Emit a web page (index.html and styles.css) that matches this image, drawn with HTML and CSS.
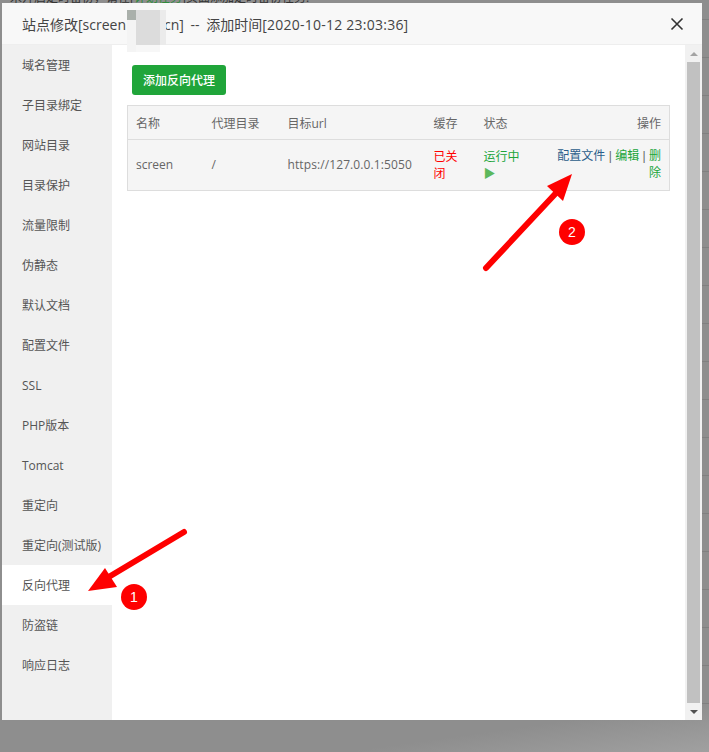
FILE: index.html
```html
<!DOCTYPE html>
<html lang="zh">
<head>
<meta charset="utf-8">
<title>站点修改</title>
<link rel="stylesheet" href="styles.css">
</head>
<body>
<div class="backdrop-text">未开启定时备份，请在[<span class="bd-green">计划任务</span>]页面添加定时备份任务!</div>
<div class="backdrop-lines"></div>
<div class="dialog">
  <header class="dialog-head">
    <div class="dialog-title">站点修改[screen<span class="title-gap"></span>cn]<span class="dash"> -- </span>添加时间<span class="date">[2020-10-12 23:03:36]</span></div>
    <svg class="close" width="14" height="14" viewBox="0 0 14 14"><path d="M1.5 1.5 12.5 12.5M12.5 1.5 1.5 12.5" stroke="#333" stroke-width="1.6" fill="none"/></svg>
  </header>
  <div class="dialog-body">
    <nav class="side">
      <div class="side-item">域名管理</div>
      <div class="side-item">子目录绑定</div>
      <div class="side-item">网站目录</div>
      <div class="side-item">目录保护</div>
      <div class="side-item">流量限制</div>
      <div class="side-item">伪静态</div>
      <div class="side-item">默认文档</div>
      <div class="side-item">配置文件</div>
      <div class="side-item">SSL</div>
      <div class="side-item">PHP版本</div>
      <div class="side-item">Tomcat</div>
      <div class="side-item">重定向</div>
      <div class="side-item">重定向(测试版)</div>
      <div class="side-item active">反向代理</div>
      <div class="side-item">防盗链</div>
      <div class="side-item">响应日志</div>
    </nav>
    <main class="content">
      <button class="add-btn">添加反向代理</button>
      <table class="proxy">
        <colgroup>
          <col class="c1"><col class="c2"><col class="c3"><col class="c4"><col class="c5"><col class="c6">
        </colgroup>
        <thead>
          <tr><th>名称</th><th>代理目录</th><th>目标url</th><th>缓存</th><th>状态</th><th class="right">操作</th></tr>
        </thead>
        <tbody>
          <tr>
            <td class="latin">screen</td>
            <td class="latin">/</td>
            <td class="latin url">https://127.0.0.1:5050</td>
            <td class="off">已关闭</td>
            <td class="on">运行中<br><span class="play">▶</span></td>
            <td class="right ops"><a class="blue">配置文件</a> | <a class="green">编辑</a> | <a class="green">删除</a></td>
          </tr>
        </tbody>
      </table>
    </main>
    <div class="scrollbar">
      <div class="scroll-btn"><span class="tri up"></span></div>
      <div class="scroll-thumb"></div>
      <div class="scroll-btn"><span class="tri down"></span></div>
    </div>
  </div>
</div>
<div class="blur b1"></div>
<div class="blur b2"></div>
<div class="blur b3"></div>
<div class="blur b4"></div>
<div class="blur b5"></div>
<svg class="marks" width="709" height="752" viewBox="0 0 709 752">
  <g fill="#fe0000" stroke="none">
    <path d="M184 532 102 581" stroke="#fe0000" stroke-width="6" stroke-linecap="round" fill="none"/>
    <polygon points="88,591 105,568 117,587"/>
    <path d="M486 268 557 192" stroke="#fe0000" stroke-width="6" stroke-linecap="round" fill="none"/>
    <polygon points="572,174 547,186 563,201"/>
    <circle cx="134" cy="597" r="13"/>
    <circle cx="572" cy="232" r="13"/>
  </g>
  <g class="mark-num">
    <text x="134" y="602" text-anchor="middle">1</text>
    <text x="572" y="237" text-anchor="middle">2</text>
  </g>
</svg>
</body>
</html>
```

FILE: styles.css
```css
html, body {
  margin: 0;
  padding: 0;
}
body {
  width: 709px;
  height: 752px;
  position: relative;
  overflow: hidden;
  background: linear-gradient(172deg, #8e8e8e 0%, #8e8e8e 94%, #a0a0a0 100%);
  font-family: "Open Sans", "Noto Sans CJK SC", sans-serif;
  font-size: 12px;
  color: #666;
}
.backdrop-text {
  height: 8px;
  margin-top: -5px;
  overflow: hidden;
  padding-left: 10px;
  font-size: 12px;
  line-height: 6px;
  color: #333;
  white-space: nowrap;
}
.bd-green {
  color: #2e8b3d;
}
.backdrop-lines {
  position: absolute;
  right: 0;
  top: 19px;
  width: 7px;
  height: 700px;
  background: repeating-linear-gradient(180deg, #808080 0, #808080 1px, transparent 1px, transparent 38px);
}
.dialog {
  position: relative;
  width: 700px;
  height: 717px;
  margin-left: 2px;
  background: #fff;
  display: flex;
  flex-direction: column;
}
.dialog-head {
  height: 41px;
  flex: none;
  background: #f8f8f8;
  border-bottom: 1px solid #eee;
  display: flex;
  align-items: center;
  justify-content: space-between;
  padding: 0 18px 0 20px;
}
.dialog-title {
  font-size: 14px;
  color: #444;
  white-space: nowrap;
}
.title-gap {
  display: inline-block;
  width: 38px;
}
.dash {
  word-spacing: 3px;
}
.date {
  letter-spacing: 0.24px;
}
.close {
  display: block;
}
.dialog-body {
  flex: 1;
  min-height: 0;
  display: flex;
}
.side {
  width: 110px;
  flex: none;
  background: #f0f0f0;
}
.side-item {
  height: 40px;
  line-height: 42px;
  padding-left: 20px;
  color: #555;
  white-space: nowrap;
}
.side-item.active {
  background: #fff;
}
.content {
  flex: 1;
  min-width: 0;
  padding: 20px 15px 0 15px;
}
.add-btn {
  display: block;
  width: 94px;
  height: 30px;
  margin-left: 5px;
  padding: 0;
  border: 0;
  border-radius: 3px;
  background: #20a53a;
  color: #fff;
  font-family: inherit;
  font-size: 12px;
  font-weight: 500;
}
.proxy {
  width: 543px;
  margin-top: 10px;
  table-layout: fixed;
  border-collapse: collapse;
  border: 1px solid #ddd;
  background: #f5f5f5;
}
.c1, .c2 { width: 76px; }
.c3 { width: 146px; }
.c4 { width: 50px; }
.c5 { width: 72px; }
.proxy th {
  height: 33px;
  padding: 0 8px;
  text-align: left;
  font-weight: 400;
  color: #666;
  border-bottom: 1px solid #ddd;
}
.proxy td {
  box-sizing: border-box;
  height: 51px;
  padding: 0 8px;
  color: #666;
  line-height: 17px;
}
.proxy td.latin {
  padding-bottom: 2px;
}
.proxy th.right, .proxy td.right {
  text-align: right;
}
.url { letter-spacing: 0.1px; }
.off { color: #ff0000 !important; word-break: break-all; }
.on { color: #20a53a !important; }
.play { color: #5cb85c; }
.ops {
  word-break: break-all;
  font-family: "Liberation Sans", "Noto Sans CJK SC", sans-serif;
}
.blue { color: #2a5d8a; }
.green { color: #20a53a; }
.scrollbar {
  width: 17px;
  flex: none;
  background: #f1f1f1;
  display: flex;
  flex-direction: column;
}
.scroll-btn {
  height: 17px;
  flex: none;
  display: flex;
  align-items: center;
  justify-content: center;
}
.scroll-thumb {
  flex: 1;
  margin: 0 2px 0 2px;
  background: #c1c1c1;
}
.tri {
  width: 0;
  height: 0;
  border-left: 4px solid transparent;
  border-right: 4px solid transparent;
}
.tri.up { border-bottom: 4px solid #a3a3a3; }
.tri.down { border-top: 4px solid #505050; }
.blur {
  position: absolute;
}
.b1 { left: 127px; top: 10px; width: 9px; height: 10px; background: #aab0ab; }
.b2 { left: 136px; top: 10px; width: 24px; height: 35px; background: #dcdcdc; }
.b3 { left: 160px; top: 10px; width: 6px; height: 35px; background: #ebebeb; }
.b4 { left: 127px; top: 20px; width: 9px; height: 32px; background: #f4f4f4; }
.b5 { left: 136px; top: 45px; width: 24px; height: 7px; background: #f7f7f7; }
.marks {
  position: absolute;
  left: 0;
  top: 0;
}
.mark-num {
  fill: #fff;
  font-family: "Liberation Sans", sans-serif;
  font-size: 14px;
}
```
